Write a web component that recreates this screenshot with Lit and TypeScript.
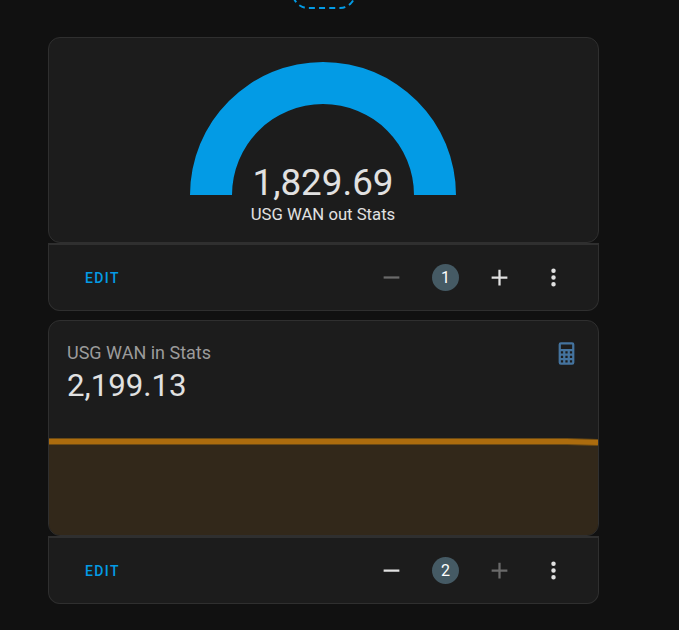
import { LitElement, html, css, svg } from "lit";
import { customElement } from "lit/decorators.js";

const minus = "M19,13H5V11H19V13Z";
const plus = "M19,13H13V19H11V13H5V11H11V5H13V11H19V13Z";
const dots = "M12,16A2,2 0 0,1 14,18A2,2 0 0,1 12,20A2,2 0 0,1 10,18A2,2 0 0,1 12,16M12,10A2,2 0 0,1 14,12A2,2 0 0,1 12,14A2,2 0 0,1 10,12A2,2 0 0,1 12,10M12,4A2,2 0 0,1 14,6A2,2 0 0,1 12,8A2,2 0 0,1 10,6A2,2 0 0,1 12,4Z";
const calc = "M7,2H17A2,2 0 0,1 19,4V20A2,2 0 0,1 17,22H7A2,2 0 0,1 5,20V4A2,2 0 0,1 7,2M7,4V8H17V4H7M7,10V12H9V10H7M11,10V12H13V10H11M15,10V12H17V10H15M7,14V16H9V14H7M11,14V16H13V14H11M15,14V16H17V14H15M7,18V20H9V18H7M11,18V20H13V18H11M15,18V20H17V18H15Z";

@customElement("app-root")
export class AppRoot extends LitElement {
  static styles = css`
    :host {
      display: block;
      width: 679px;
      height: 630px;
      overflow: hidden;
      background: #111111;
      font-family: Roboto, "Liberation Sans", sans-serif;
      color: #e1e1e1;
    }
    .top {
      height: 37px;
      display: flex;
      justify-content: center;
      overflow: hidden;
    }
    .drop {
      width: 64px;
      height: 40px;
      margin: -31px 0 0 -31px;
      box-sizing: border-box;
      border: 2px dashed #039be5;
      border-radius: 16px;
      flex: none;
    }
    .col {
      width: 551px;
      margin-left: 48px;
      display: flex;
      flex-direction: column;
    }
    .card {
      box-sizing: border-box;
      background: #1c1c1c;
      border: 1px solid #2f2f2f;
      border-radius: 12px;
      overflow: hidden;
    }
    .gauge {
      height: 206px;
      display: flex;
      flex-direction: column;
      align-items: center;
      padding-top: 24px;
    }
    .dial {
      display: block;
      width: 266px;
      height: 133px;
      margin-left: -2px;
      flex: none;
    }
    .gauge-val {
      font-size: 36.8px;
      line-height: 36px;
      margin-top: -30px;
      margin-left: -1px;
      color: #e1e1e1;
    }
    .gauge-name {
      font-size: 16.7px;
      line-height: 20px;
      margin-top: 4px;
      margin-left: -1px;
    }
    .footer {
      height: 68px;
      border-top: 2px solid #2f2f2f;
      border-radius: 0 0 12px 12px;
      display: flex;
      align-items: center;
      padding-left: 36px;
    }
    .edit {
      font-size: 14px;
      font-weight: 500;
      letter-spacing: 1.4px;
      color: #039be5;
    }
    .ctrl {
      margin-left: auto;
      display: flex;
      align-items: center;
      gap: 27px;
      padding-right: 31px;
    }
    .ctrl svg {
      width: 27px;
      height: 27px;
      display: block;
      fill: #e1e1e1;
    }
    .ctrl svg.off {
      fill: #6a6a6a;
    }
    .badge {
      width: 27px;
      height: 27px;
      border-radius: 50%;
      background: #455a64;
      color: #ffffff;
      font-size: 16px;
      display: flex;
      align-items: center;
      justify-content: center;
    }
    .sensor {
      height: 216px;
      margin-top: 9px;
      display: flex;
      flex-direction: column;
    }
    .head {
      display: flex;
      justify-content: space-between;
      padding: 19px 18px 0 18px;
    }
    .name {
      font-size: 18px;
      line-height: 20px;
      color: #9b9b9b;
      margin-top: 3px;
    }
    .calc {
      width: 27px;
      height: 27px;
      fill: #44739e;
      display: block;
    }
    .value {
      font-size: 31.2px;
      line-height: 36px;
      color: #e1e1e1;
      padding-left: 18px;
      margin-top: 1px;
    }
    .graph {
      display: block;
      width: 549px;
      height: 98px;
      margin-top: auto;
    }
  `;

  private footer(lowOff: boolean, highOff: boolean, n: string) {
    return html`<div class="card footer">
      <span class="edit">EDIT</span>
      <div class="ctrl">
        <svg class=${lowOff ? "off" : ""} viewBox="0 0 24 24"><path d=${minus}></path></svg>
        <span class="badge">${n}</span>
        <svg class=${highOff ? "off" : ""} viewBox="0 0 24 24"><path d=${plus}></path></svg>
        <svg viewBox="0 0 24 24"><path d=${dots}></path></svg>
      </div>
    </div>`;
  }

  render() {
    return html`
      <div class="top"><div class="drop"></div></div>
      <div class="col">
        <div class="card gauge">
          <svg class="dial" viewBox="0 0 266 133">
            ${svg`<path fill="#039be5" d="M0,133A133,133 0 0,1 266,133H224A91,91 0 0,0 42,133Z"></path>`}
          </svg>
          <div class="gauge-val">1,829.69</div>
          <div class="gauge-name">USG WAN out Stats</div>
        </div>
        ${this.footer(true, false, "1")}
        <div class="card sensor">
          <div class="head">
            <span class="name">USG WAN in Stats</span>
            <svg class="calc" viewBox="0 0 24 24"><path d=${calc}></path></svg>
          </div>
          <div class="value">2,199.13</div>
          <svg class="graph" viewBox="0 0 549 98" preserveAspectRatio="none">
            ${svg`<path fill="#32281a" d="M0,4.5H518L549,5.5V98H0Z"></path>
            <path fill="none" stroke="#6b4a14" stroke-width="7" d="M0,4.5H518L549,5.5"></path>
            <path fill="none" stroke="#ac6c0e" stroke-width="5" d="M0,4.5H518L549,5.5"></path>`}
          </svg>
        </div>
        ${this.footer(false, true, "2")}
      </div>
    `;
  }
}
